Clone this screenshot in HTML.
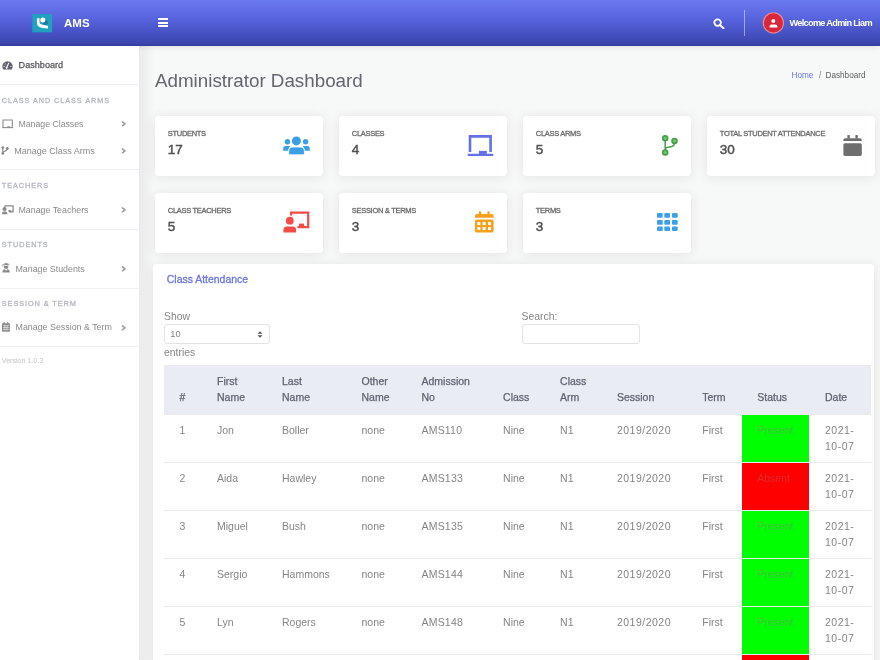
<!DOCTYPE html>
<html><head><meta charset="utf-8">
<style>
*{box-sizing:border-box;margin:0;padding:0}
html,body{width:880px;height:660px;overflow:hidden}
body{font-family:"Liberation Sans",sans-serif;background:#f7f8f8;position:relative;color:#757575}
.abs{position:absolute}
#topbar{position:absolute;left:0;top:0;width:880px;height:45.5px;background:linear-gradient(180deg,#6b79f0 0%,#5864dd 40%,#4652c2 72%,#3b46ad 94%,#343c9c 100%);z-index:5;box-shadow:0 1px 6px rgba(0,0,0,.09)}
#sidebar{position:absolute;left:0;top:45.5px;width:139px;height:615px;background:#fff;z-index:6}
.t{position:absolute;white-space:nowrap;line-height:1}
.hr{position:absolute;left:0;width:139px;height:1px;background:#eef0f3}
.head{font-size:7.3px;letter-spacing:0.93px;color:#b5b7c2;font-weight:normal;-webkit-text-stroke:.3px #b5b7c2}
.nav{font-size:9.2px;color:#8a8a8a}
.chev{position:absolute;left:119.4px;width:4.4px;height:4.4px;border-right:1.9px solid #999;border-top:1.9px solid #999;transform:rotate(45deg)}
.card{position:absolute;background:#fff;border-radius:4px;box-shadow:0 1px 12px rgba(40,50,50,.10)}
.lbl{position:absolute;left:12.8px;top:14px;font-size:7.5px;font-weight:normal;-webkit-text-stroke:.3px #6b6b6b;color:#6b6b6b;white-space:nowrap;line-height:1;letter-spacing:-0.3px}
.num{position:absolute;left:12.8px;top:27px;font-size:13.5px;font-weight:normal;-webkit-text-stroke:.45px #505050;color:#505050;line-height:1}
.ico{position:absolute}
table{position:absolute;left:164px;top:365px;border-collapse:collapse;table-layout:fixed;width:706.5px}
th,td{font-size:10.5px;line-height:16px;padding:7.5px 0 7.5px 15.5px;text-align:left;vertical-align:bottom}
th{background:#eaecf4;color:#60626f;-webkit-text-stroke:.25px #60626f;font-weight:normal;height:49px;padding-top:8.45px;padding-bottom:8.55px}
td{vertical-align:top;color:#858585;border-top:1px solid #ebebef;height:48px}
td.d{letter-spacing:.5px}td.a{letter-spacing:.2px}
td.g{background:#00ff00;color:#3cc03c}
td.r{background:#ff0000;color:#d82c2c}
</style></head><body><div id="wrap" style="position:absolute;left:0;top:0;width:880px;height:660px;overflow:hidden;filter:blur(.35px)">
<div id="topbar">
  <svg class="abs" style="left:0;top:0" width="60" height="45"><rect x="32.3" y="14.1" width="19.8" height="18.2" fill="#22a0bf"/><circle cx="45.3" cy="22.6" r="2.7" fill="#17628f" opacity=".6"/><path d="M36.9 18.3H39.5V22.2Q39.7 24.5 42.6 24.8L47.9 25.7V28.4L42.2 27.9Q37 27.2 36.9 22.5Z" fill="#fff"/><circle cx="42.8" cy="20" r="2.5" fill="#fff"/></svg>
  <div class="t" style="left:64px;top:17.5px;font-size:11.5px;font-weight:bold;color:#fff">AMS</div>
  <div class="abs" style="left:157.5px;top:18px;width:10px;height:2px;background:#fff"></div>
  <div class="abs" style="left:157.5px;top:21.7px;width:10px;height:2px;background:#fff"></div>
  <div class="abs" style="left:157.5px;top:25.4px;width:10px;height:2px;background:#fff"></div>
  <svg class="abs" style="left:713px;top:18px" width="12" height="11" viewBox="0 0 12 11"><circle cx="4.6" cy="4.6" r="3.3" fill="none" stroke="#fff" stroke-width="1.8"/><line x1="7" y1="7" x2="10.5" y2="10.3" stroke="#fff" stroke-width="2" stroke-linecap="round"/></svg>
  <div class="abs" style="left:744px;top:10px;width:1px;height:26px;background:rgba(255,255,255,.45)"></div>
  <svg class="abs" style="left:760px;top:10px" width="27" height="27"><circle cx="13.4" cy="12.9" r="10.1" fill="#d8283a" stroke="#e98a98" stroke-width="1.1"/><circle cx="13.3" cy="10.9" r="2" fill="#fff"/><path d="M9.6 17.5V16.2Q9.6 14.4 11.4 14.4H15.2Q17.3 14.4 17.3 16.2V17.5Z" fill="#fff"/></svg>
  <div class="t" style="left:789.5px;top:19px;font-size:9.2px;font-weight:bold;color:#fff;letter-spacing:-0.7px">Welcome Admin Liam</div>
</div>

<div id="sidebar">
  <svg class="abs" style="left:2px;top:15.5px" width="11" height="9" viewBox="0 0 11 9"><path d="M5.5 0.3A5.2 5.2 0 0 0 0.3 5.5c0 1.1 .35 2.2 .95 3.1h8.5c.6-.9 .95-2 .95-3.1A5.2 5.2 0 0 0 5.5 0.3z" fill="#5f6170"/><path d="M6.6 2.2L4.7 6.6" stroke="#fff" stroke-width="1.1" stroke-linecap="round"/><circle cx="4.6" cy="6.8" r="1" fill="#fff"/><circle cx="2.1" cy="5.4" r=".55" fill="#fff"/><circle cx="3.1" cy="3" r=".55" fill="#fff"/><circle cx="8.9" cy="5.4" r=".55" fill="#fff"/></svg>
  <div class="t nav" style="left:18.6px;top:15px;color:#55555c;font-size:9.1px;-webkit-text-stroke:.25px #55555c">Dashboard</div>
  <div class="hr" style="top:38.5px"></div>
  <div class="t head" style="left:1.8px;top:51px">CLASS AND CLASS ARMS</div>
  <svg class="abs" style="left:1.7px;top:73.5px" width="12" height="10" viewBox="0 0 12 10"><path d="M1 8.5V1h9.3v7.5" fill="none" stroke="#8c8c8c" stroke-width="1.1"/><path d="M0.2 8.6h11" stroke="#8c8c8c" stroke-width="1.1"/><rect x="5.3" y="7.3" width="2.8" height="1.4" fill="#8c8c8c"/></svg>
  <div class="t nav" style="left:18.5px;top:74.3px;font-size:8.73px">Manage Classes</div>
  <svg class="abs" style="left:119.6px;top:74.75px" width="8" height="8" viewBox="0 0 8 8"><path d="M2.4 1.9L5.1 3.85 2.4 5.8" fill="none" stroke="#9b9b9b" stroke-width="1.55" stroke-linecap="round" stroke-linejoin="round"/></svg>
  <svg class="abs" style="left:1.4px;top:100.8px" width="8" height="9" viewBox="0 0 8 9"><circle cx="1.8" cy="1.6" r="1.4" fill="#8c8c8c"/><circle cx="1.8" cy="7.4" r="1.4" fill="#8c8c8c"/><circle cx="6.3" cy="2.5" r="1.4" fill="#8c8c8c"/><path d="M1.8 1.6V7.4M1.8 6C3.8 5.4 6.3 5.3 6.3 2.6" fill="none" stroke="#8c8c8c" stroke-width="1.2"/></svg>
  <div class="t nav" style="left:14.2px;top:101.1px;font-size:9px">Manage Class Arms</div>
  <svg class="abs" style="left:119.6px;top:101.75px" width="8" height="8" viewBox="0 0 8 8"><path d="M2.4 1.9L5.1 3.85 2.4 5.8" fill="none" stroke="#9b9b9b" stroke-width="1.55" stroke-linecap="round" stroke-linejoin="round"/></svg>
  <div class="hr" style="top:123.5px"></div>
  <div class="t head" style="left:1.8px;top:136.5px">TEACHERS</div>
  <svg class="abs" style="left:2px;top:159.3px" width="12" height="10" viewBox="0 0 12 10"><path d="M3 2.2V.9h8.1v6H7.2" fill="none" stroke="#8a8a8a" stroke-width="1.25"/><circle cx="2.5" cy="4" r="2.1" fill="#8a8a8a"/><path d="M0 9.3V8.3Q0 6.4 1.9 6.4H3.4Q5.3 6.4 5.3 8.3V9.3z" fill="#8a8a8a"/><rect x="6.4" y="5.1" width="2.9" height="1.8" fill="#8a8a8a"/></svg>
  <div class="t nav" style="left:18.5px;top:160px;font-size:8.84px">Manage Teachers</div>
  <svg class="abs" style="left:119.6px;top:160.45px" width="8" height="8" viewBox="0 0 8 8"><path d="M2.4 1.9L5.1 3.85 2.4 5.8" fill="none" stroke="#9b9b9b" stroke-width="1.55" stroke-linecap="round" stroke-linejoin="round"/></svg>
  <div class="hr" style="top:183.5px"></div>
  <div class="t head" style="left:1.8px;top:195.8px">STUDENTS</div>
  <svg class="abs" style="left:1.7px;top:217.6px" width="9" height="10" viewBox="0 0 9 10"><path d="M.2 1.2L4.1 0l3.9 1.2-3.9 1.1z" fill="#8c8c8c"/><path d="M1.8 2.2v1.5a2.3 2.3 0 0 0 4.6 0V2.2L4.1 3z" fill="#8c8c8c"/><path d="M.3 9.6c0-2 1-3.1 2.3-3.3l1.5 1.5 1.5-1.5c1.3.2 2.3 1.3 2.3 3.3z" fill="#8c8c8c"/><path d="M.6 1.4v2.4" stroke="#8c8c8c" stroke-width=".6"/></svg>
  <div class="t nav" style="left:15.5px;top:219px;font-size:8.84px">Manage Students</div>
  <svg class="abs" style="left:119.6px;top:219.45px" width="8" height="8" viewBox="0 0 8 8"><path d="M2.4 1.9L5.1 3.85 2.4 5.8" fill="none" stroke="#9b9b9b" stroke-width="1.55" stroke-linecap="round" stroke-linejoin="round"/></svg>
  <div class="hr" style="top:242px"></div>
  <div class="t head" style="left:1.8px;top:254.3px">SESSION &amp; TERM</div>
  <svg class="abs" style="left:2px;top:276.6px" width="8" height="10" viewBox="0 0 8 10"><rect x="0" y="1.3" width="7.9" height="8.4" rx=".8" fill="#8c8c8c"/><rect x="1.6" y="0" width="1" height="2" fill="#8c8c8c"/><rect x="5.3" y="0" width="1" height="2" fill="#8c8c8c"/><path d="M.9 3.6h6.1M.9 5.5h6.1M.9 7.4h6.1M2.8 3.6v4.9M5.1 3.6v4.9" stroke="#fff" stroke-width=".5"/></svg>
  <div class="t nav" style="left:15.5px;top:277.6px;font-size:8.87px">Manage Session &amp; Term</div>
  <svg class="abs" style="left:119.6px;top:278.05px" width="8" height="8" viewBox="0 0 8 8"><path d="M2.4 1.9L5.1 3.85 2.4 5.8" fill="none" stroke="#9b9b9b" stroke-width="1.55" stroke-linecap="round" stroke-linejoin="round"/></svg>
  <div class="hr" style="top:300.9px"></div>
  <div class="t" style="left:1.8px;top:312px;font-size:7.1px;color:#c4c4c4">Version 1.0.3</div>
</div>

<div class="abs" style="left:139px;top:45px;width:15px;height:615px;background:linear-gradient(90deg,#e9ecec 0%,#eef0f0 45%,#f7f8f8 100%)"></div>
<div class="t" style="left:155px;top:71.6px;font-size:18.8px;color:#63666e">Administrator Dashboard</div>
<div class="t" style="left:791.5px;top:72px;font-size:8.2px;color:#6777ef">Home</div>
<div class="t" style="left:819px;top:72px;font-size:8.2px;color:#757575">/</div>
<div class="t" style="left:825.5px;top:72.2px;font-size:8.2px;color:#616161">Dashboard</div>

<div class="card" style="left:155px;top:116px;width:168px;height:60px"><div class="lbl">STUDENTS</div><div class="num">17</div></div>
<div class="card" style="left:339px;top:116px;width:168px;height:60px"><div class="lbl">CLASSES</div><div class="num">4</div></div>
<div class="card" style="left:523px;top:116px;width:168px;height:60px"><div class="lbl">CLASS ARMS</div><div class="num">5</div></div>
<div class="card" style="left:707px;top:116px;width:168px;height:60px"><div class="lbl">TOTAL STUDENT ATTENDANCE</div><div class="num">30</div></div>
<div class="card" style="left:155px;top:192.5px;width:168px;height:60px"><div class="lbl">CLASS TEACHERS</div><div class="num">5</div></div>
<div class="card" style="left:339px;top:192.5px;width:168px;height:60px"><div class="lbl">SESSION &amp; TERMS</div><div class="num">3</div></div>
<div class="card" style="left:523px;top:192.5px;width:168px;height:60px"><div class="lbl">TERMS</div><div class="num">3</div></div>

<svg class="abs" style="left:0;top:0;z-index:4" width="880" height="260" viewBox="0 0 880 260">
 <g fill="#3b9fe6">
  <circle cx="296.4" cy="140.9" r="4.5"/>
  <circle cx="287.4" cy="141.7" r="2.7"/>
  <circle cx="305.6" cy="141.7" r="2.7"/>
  <path d="M283.2 150.8V148.6Q283.2 145.9 285.9 145.9H290.3Q288.3 147.6 288.2 150.8Z"/>
  <path d="M309.8 150.8V148.6Q309.8 145.9 307.1 145.9H302.7Q304.7 147.6 304.8 150.8Z"/>
  <path d="M288.7 154.8V151.4Q288.7 147 293.1 147H300Q304.4 147 304.4 151.4V154.8Z" stroke="#fff" stroke-width=".8"/>
 </g>
 <g fill="#6370e8">
  <path d="M470 152V136.4H490.6V152" fill="none" stroke="#6370e8" stroke-width="2.6"/>
  <rect x="467.5" y="153.8" width="25.9" height="2.1" rx=".8"/>
  <rect x="479" y="150.9" width="7.8" height="3.2"/>
 </g>
 <g fill="#66c86a" stroke="#439c47" stroke-width="1.5">
  <circle cx="665.2" cy="138.3" r="2.5"/>
  <circle cx="674.5" cy="141" r="2.5"/>
  <circle cx="665.2" cy="152.6" r="2.5"/>
  <path d="M665.2 140.7V150.2M665.4 148.4C667.5 146.2 674.5 148 674.5 143.4" fill="none"/>
 </g>
 <g fill="#6e6e6e">
  <rect x="843.4" y="143.2" width="18.4" height="12.7" rx="1.6"/>
  <path d="M843.4 141.1V140Q843.4 138.2 845.2 138.2H860Q861.8 138.2 861.8 140V141.1Z"/>
  <rect x="847.4" y="135" width="2.4" height="3.5" rx=".6"/>
  <rect x="855.4" y="135" width="2.4" height="3.5" rx=".6"/>
 </g>
 <g fill="#f24b48">
  <path d="M291.1 215.6V212.7H308.2V227.1H297.5" fill="none" stroke="#f24b48" stroke-width="2.2"/>
  <circle cx="289.8" cy="220.7" r="3.9"/>
  <path d="M283.4 232.5V230Q283.4 226.4 287 226.4H292.5Q296.1 226.4 296.1 230V232.5Z"/>
  <rect x="299" y="223.6" width="5" height="4.4"/>
 </g>
 <g fill="#f7a01e">
  <rect x="475" y="219.5" width="18.6" height="13" rx="1.6"/>
  <path d="M475 217.7V215.7Q475 213.9 476.8 213.9H491.8Q493.6 213.9 493.6 215.7V217.7Z"/>
  <rect x="478.9" y="211.3" width="2.3" height="3.4" rx=".6"/>
  <rect x="487.4" y="211.3" width="2.3" height="3.4" rx=".6"/>
 </g>
 <g fill="#fff">
  <rect x="477.4" y="221.9" width="3" height="3" rx=".5"/><rect x="482.6" y="221.9" width="3" height="3" rx=".5"/><rect x="488" y="221.9" width="3" height="3" rx=".5"/>
  <rect x="477.4" y="227.1" width="3" height="3" rx=".5"/><rect x="482.6" y="227.1" width="3" height="3" rx=".5"/><rect x="488" y="227.1" width="3" height="3" rx=".5"/>
 </g>
 <g fill="#3aa0e8">
  <rect x="657" y="213" width="5.7" height="4.7" rx="1"/><rect x="664.3" y="213" width="5.7" height="4.7" rx="1"/><rect x="672" y="213" width="5.7" height="4.7" rx="1"/>
  <rect x="657" y="220" width="5.7" height="4.7" rx="1"/><rect x="664.3" y="220" width="5.7" height="4.7" rx="1"/><rect x="672" y="220" width="5.7" height="4.7" rx="1"/>
  <rect x="657" y="226.4" width="5.7" height="4.7" rx="1"/><rect x="664.3" y="226.4" width="5.7" height="4.7" rx="1"/><rect x="672" y="226.4" width="5.7" height="4.7" rx="1"/>
 </g>
</svg>

<div class="card" style="left:153px;top:263.5px;width:721px;height:420px"></div>
<div class="t" style="left:166.8px;top:275.4px;font-size:10.45px;-webkit-text-stroke:.3px #6c74e4;color:#6c74e4">Class Attendance</div>
<div class="t" style="left:164px;top:312px;font-size:10.4px;color:#868686">Show</div>
<div class="abs" style="left:164px;top:323.5px;width:106px;height:20px;border:1px solid #e2e3e6;border-radius:3px;background:#fff"></div>
<div class="t" style="left:170.3px;top:329.8px;font-size:9.3px;color:#868686">10</div>
<svg class="abs" style="left:256.5px;top:330.5px" width="6" height="7" viewBox="0 0 6 7"><path d="M.5 2.8L3 .3 5.5 2.8z M.5 4.2L3 6.7 5.5 4.2z" fill="#555"/></svg>
<div class="t" style="left:164px;top:347.8px;font-size:10.4px;color:#868686">entries</div>
<div class="t" style="left:521.5px;top:311.7px;font-size:10.4px;color:#868686">Search:</div>
<div class="abs" style="left:521.5px;top:323.5px;width:118px;height:20.5px;border:1px solid #e2e3e6;border-radius:3px;background:#fff"></div>

<table>
<colgroup><col style="width:37.5px"><col style="width:65px"><col style="width:79.5px"><col style="width:60px"><col style="width:81.6px"><col style="width:57px"><col style="width:56.8px"><col style="width:85.4px"><col style="width:55px"><col style="width:67.7px"><col style="width:61px"></colgroup>
<tr><th>#</th><th>First<br>Name</th><th>Last<br>Name</th><th>Other<br>Name</th><th>Admission<br>No</th><th>Class</th><th>Class<br>Arm</th><th>Session</th><th>Term</th><th>Status</th><th>Date</th></tr>
<tr><td>1</td><td>Jon</td><td>Boller</td><td>none</td><td class="a">AMS110</td><td>Nine</td><td>N1</td><td class="d">2019/2020</td><td>First</td><td class="g">Present</td><td class="d">2021-<br>10-07</td></tr>
<tr><td>2</td><td>Aida</td><td>Hawley</td><td>none</td><td class="a">AMS133</td><td>Nine</td><td>N1</td><td class="d">2019/2020</td><td>First</td><td class="r">Absent</td><td class="d">2021-<br>10-07</td></tr>
<tr><td>3</td><td>Miguel</td><td>Bush</td><td>none</td><td class="a">AMS135</td><td>Nine</td><td>N1</td><td class="d">2019/2020</td><td>First</td><td class="g">Present</td><td class="d">2021-<br>10-07</td></tr>
<tr><td>4</td><td>Sergio</td><td>Hammons</td><td>none</td><td class="a">AMS144</td><td>Nine</td><td>N1</td><td class="d">2019/2020</td><td>First</td><td class="g">Present</td><td class="d">2021-<br>10-07</td></tr>
<tr><td>5</td><td>Lyn</td><td>Rogers</td><td>none</td><td class="a">AMS148</td><td>Nine</td><td>N1</td><td class="d">2019/2020</td><td>First</td><td class="g">Present</td><td class="d">2021-<br>10-07</td></tr>
<tr><td>6</td><td>Jon</td><td>Boller</td><td>none</td><td class="a">AMS110</td><td>Nine</td><td>N1</td><td class="d">2019/2020</td><td>First</td><td class="r">Absent</td><td class="d">2021-<br>10-07</td></tr>
</table>
</div></body></html>
